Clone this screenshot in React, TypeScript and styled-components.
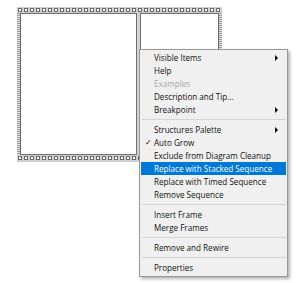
import styled, { createGlobalStyle } from "styled-components";

const GlobalStyle = createGlobalStyle`
  html, body {
    margin: 0;
    padding: 0;
    background: #ffffff;
  }
  body {
    width: 300px;
    height: 283px;
    overflow: hidden;
    font-family: "Open Sans", "Noto Sans", sans-serif;
  }
`

const Canvas = styled.div`
  position: relative;
  width: 300px;
  height: 283px;
  padding: 7px 0 0 17px;
  box-sizing: border-box;
`

const Sequence = styled.div`
  display: grid;
  grid-template-rows: 6px 1fr 7px;
  width: 205px;
  height: 155px;
  background: #dadada;
`

const FrameRow = styled.div`
  display: flex;
`

const Edge = styled.div`
  width: 3px;
  background: repeating-linear-gradient(to bottom, #9a9a9a 0 1px, #e4e4e4 1px 2px);
`

const Divider = styled.div`
  width: 3px;
  background: #d4d4d4;
`

const Frame = styled.div<{ $width?: number }>`
  ${p => (p.$width ? `width: ${p.$width}px;` : "flex: 1;")}
  background: #ffffff;
  border: 1px solid #6e6e6e;
  box-sizing: border-box;
`

const Strip = styled.svg`
  display: block;
  width: 205px;
  height: 100%;
`

const FilmStrip = ({ id }: { id: string }) => (
  <Strip>
    <defs>
      <pattern id={id} width="6" height="7" patternUnits="userSpaceOnUse">
        <rect width="6" height="7" fill="#cfcfcf" />
        <rect x="1.5" y="1.5" width="3" height="3" fill="#ffffff" stroke="#6a6a6a" strokeWidth="1" />
      </pattern>
    </defs>
    <rect width="100%" height="100%" fill={`url(#${id})`} />
  </Strip>
)

const Menu = styled.div`
  position: absolute;
  left: 139px;
  top: 49px;
  width: 149px;
  padding: 1px 1px 2px;
  box-sizing: border-box;
  background: #f0f0f0;
  border: 1px solid #979797;
  box-shadow: 2px 2px 3px rgba(0, 0, 0, 0.3);
  display: flex;
  flex-direction: column;
`

const Item = styled.div<{ $active?: boolean; $disabled?: boolean }>`
  position: relative;
  display: flex;
  align-items: center;
  height: 13px;
  padding-left: 13px;
  padding-right: 8px;
  font-size: 8.1px;
  color: ${p => (p.$active ? "#ffffff" : p.$disabled ? "#a8a8a8" : "#111111")};
  background: ${p => (p.$active ? "#0078d7" : "transparent")};
  white-space: nowrap;
`

const Label = styled.span`
  flex: 1;
`

const Check = styled.span`
  position: absolute;
  left: 4px;
  top: 0;
  font-family: "DejaVu Sans", sans-serif;
  font-size: 8px;
  line-height: 13px;
`

const Arrow = styled.span`
  width: 0;
  height: 0;
  border-left: 3px solid #000000;
  border-top: 3px solid transparent;
  border-bottom: 3px solid transparent;
`

const Separator = styled.div`
  height: 1px;
  margin: 3px 0 3px 1px;
  background: #d4d4d4;
`

type Entry =
  | { sep: true }
  | { label: string; sub?: boolean; checked?: boolean; disabled?: boolean; active?: boolean }

const entries: Entry[] = [
  { label: "Visible Items", sub: true },
  { label: "Help" },
  { label: "Examples", disabled: true },
  { label: "Description and Tip..." },
  { label: "Breakpoint", sub: true },
  { sep: true },
  { label: "Structures Palette", sub: true },
  { label: "Auto Grow", checked: true },
  { label: "Exclude from Diagram Cleanup" },
  { label: "Replace with Stacked Sequence", active: true },
  { label: "Replace with Timed Sequence" },
  { label: "Remove Sequence" },
  { sep: true },
  { label: "Insert Frame" },
  { label: "Merge Frames" },
  { sep: true },
  { label: "Remove and Rewire" },
  { sep: true },
  { label: "Properties" },
]

const App = () => {
  return (
    <Canvas>
      <GlobalStyle />
      <Sequence>
        <FilmStrip id="film-top" />
        <FrameRow>
          <Edge />
          <Frame $width={117} />
          <Divider />
          <Frame />
          <Edge />
        </FrameRow>
        <FilmStrip id="film-bottom" />
      </Sequence>
      <Menu>
        {entries.map((e, i) =>
          "sep" in e ? (
            <Separator key={i} />
          ) : (
            <Item key={i} $active={e.active} $disabled={e.disabled}>
              {e.checked && <Check>✓</Check>}
              <Label>{e.label}</Label>
              {e.sub && <Arrow />}
            </Item>
          )
        )}
      </Menu>
    </Canvas>
  )
}

export default App
